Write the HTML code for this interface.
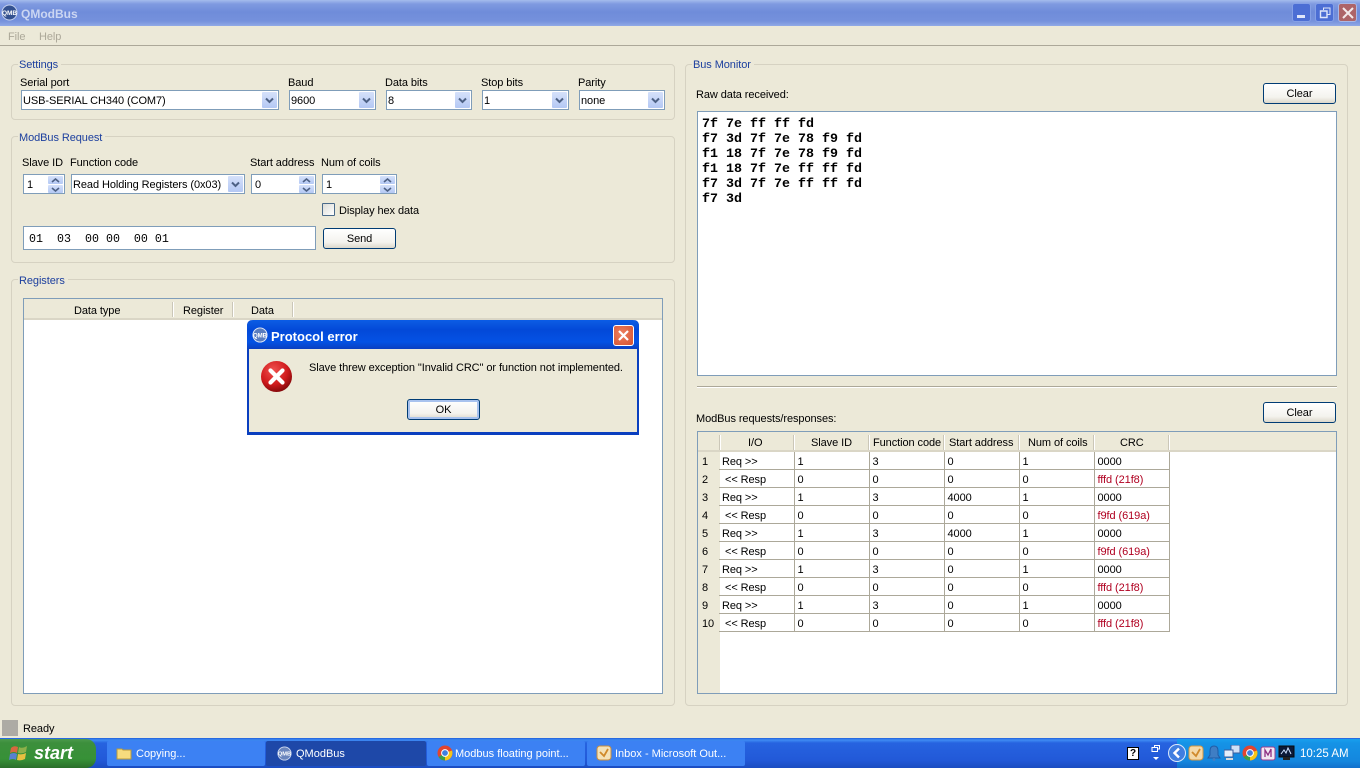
<!DOCTYPE html>
<html><head><meta charset="utf-8"><title>QModBus</title>
<style>
html,body{margin:0;padding:0;width:1360px;height:768px;overflow:hidden;background:#ece9d8}
body{position:relative;font-family:"Liberation Sans",sans-serif;font-size:11px;color:#000;letter-spacing:-.08px}
.t{position:absolute;white-space:nowrap;line-height:14px;height:14px;margin-top:2px}
.b{position:absolute;box-sizing:border-box}
.g{position:absolute;box-sizing:border-box;border:1px solid #d6d2c2;border-radius:4px}
.gt{position:absolute;white-space:nowrap;line-height:14px;background:#ece9d8;color:#1c3f9e;padding:0 3px 0 1px;margin:1px 0 0 -1px}
.in{position:absolute;box-sizing:border-box;background:#fff;border:1px solid #7f9db9;line-height:20px;padding-left:1px;white-space:nowrap}
.ar{position:absolute;right:1px;top:1px;bottom:1px;width:15px;background:linear-gradient(#d5e1fa,#b4c8f4);border-radius:1px}
.ar svg{position:absolute;left:3px;top:5px}
.sp{position:absolute;right:1px;top:1px;bottom:1px;width:15px}
.sp i{position:absolute;left:0;width:15px;height:8px;background:linear-gradient(#d5e1fa,#b4c8f4);border-radius:1px}
.sp svg{position:absolute;left:3px;top:2px}
.btn{position:absolute;box-sizing:border-box;border:1px solid #003c74;border-radius:3px;background:linear-gradient(#fff,#f4f3ee 70%,#dcd8cb);text-align:center;line-height:20px;white-space:nowrap}
.hd{position:absolute;background:#ece9d8;border-bottom:2px solid #dad6c6}
.sec{position:absolute;top:3px;height:15px;width:1px;background:#cbc7b8;box-shadow:1px 0 0 #fff}
table{border-collapse:collapse;table-layout:fixed;position:absolute;font-size:11px}
td{border:1px solid #aca899;border-left:0;border-top:0;height:14px;padding:3px 0 0 3px;line-height:14px;white-space:nowrap;overflow:hidden}
.red{color:#b00020}
.rh{position:absolute;left:699px;width:21px;height:18px;line-height:21px;box-sizing:border-box;padding-left:3px}
.task{position:absolute;top:741px;height:25px;border-radius:2px;box-sizing:border-box;color:#fff;line-height:26px;background:#3c81f3;white-space:nowrap;letter-spacing:0}
</style></head><body>

<!-- title bar -->
<div class="b" style="left:0;top:0;width:1360px;height:26px;background:linear-gradient(#a5bcec 0,#7f9ae0 4px,#6f8cda 12px,#7591dc 21px,#90a9e6 26px)"></div>
<svg class="b" style="left:1px;top:4px" width="17" height="17" viewBox="0 0 17 17"><circle cx="8.5" cy="8.5" r="7.5" fill="#33518f" stroke="#c7d3ee"/><text x="8.5" y="11" font-family="Liberation Sans" font-size="6.5" font-weight="bold" text-anchor="middle" fill="#fff">QMB</text></svg>
<div class="t" style="left:21px;top:5px;font-size:12px;font-weight:bold;color:#cbd6f2;letter-spacing:0">QModBus</div>
<!-- window buttons -->
<div class="b" style="left:1292px;top:3px;width:19px;height:19px;border-radius:3px;background:#4c6ed4;border:1px solid #85a0e6"><div class="b" style="left:4px;top:11px;width:8px;height:3px;background:#dfe6fa"></div></div>
<div class="b" style="left:1315px;top:3px;width:19px;height:19px;border-radius:3px;background:#4c6ed4;border:1px solid #85a0e6"><svg class="b" style="left:3px;top:3px" width="12" height="12" viewBox="0 0 12 12" fill="none" stroke="#dfe6fa"><path d="M4.5 3V1h6.5v6.5H8.5"/><path d="M1.5 4h6.5v6.5H1.5z" stroke-width="1.4"/></svg></div>
<div class="b" style="left:1338px;top:3px;width:19px;height:19px;border-radius:3px;background:#ad6468;border:1px solid #a9b8e6"><svg class="b" style="left:3px;top:3px" width="12" height="12" viewBox="0 0 12 12"><path d="M1 1L11 11M11 1L1 11" stroke="#f3e9ea" stroke-width="2"/></svg></div>

<!-- menu -->
<div class="t" style="left:8px;top:28px;color:#aca899">File</div>
<div class="t" style="left:39px;top:28px;color:#aca899">Help</div>
<div class="b" style="left:0;top:45px;width:1360px;height:1px;background:#aca899"></div>

<!-- Settings -->
<div class="g" style="left:11px;top:64px;width:664px;height:56px"></div>
<div class="gt" style="left:19px;top:57px">Settings</div>
<div class="t" style="left:20px;top:74px">Serial port</div>
<div class="t" style="left:288px;top:74px">Baud</div>
<div class="t" style="left:385px;top:74px">Data bits</div>
<div class="t" style="left:481px;top:74px">Stop bits</div>
<div class="t" style="left:578px;top:74px">Parity</div>
<div class="in" style="left:21px;top:90px;width:258px;height:20px">USB-SERIAL CH340 (COM7)<div class="ar"><svg width="9" height="7" viewBox="0 0 9 7"><path d="M1 1.5L4.5 5L8 1.5" fill="none" stroke="#4d6185" stroke-width="2"/></svg></div></div>
<div class="in" style="left:289px;top:90px;width:87px;height:20px">9600<div class="ar"><svg width="9" height="7" viewBox="0 0 9 7"><path d="M1 1.5L4.5 5L8 1.5" fill="none" stroke="#4d6185" stroke-width="2"/></svg></div></div>
<div class="in" style="left:386px;top:90px;width:86px;height:20px">8<div class="ar"><svg width="9" height="7" viewBox="0 0 9 7"><path d="M1 1.5L4.5 5L8 1.5" fill="none" stroke="#4d6185" stroke-width="2"/></svg></div></div>
<div class="in" style="left:482px;top:90px;width:87px;height:20px">1<div class="ar"><svg width="9" height="7" viewBox="0 0 9 7"><path d="M1 1.5L4.5 5L8 1.5" fill="none" stroke="#4d6185" stroke-width="2"/></svg></div></div>
<div class="in" style="left:579px;top:90px;width:86px;height:20px">none<div class="ar"><svg width="9" height="7" viewBox="0 0 9 7"><path d="M1 1.5L4.5 5L8 1.5" fill="none" stroke="#4d6185" stroke-width="2"/></svg></div></div>

<!-- ModBus Request -->
<div class="g" style="left:11px;top:136px;width:664px;height:127px"></div>
<div class="gt" style="left:19px;top:130px">ModBus Request</div>
<div class="t" style="left:22px;top:154px">Slave ID</div>
<div class="t" style="left:70px;top:154px">Function code</div>
<div class="t" style="left:250px;top:154px">Start address</div>
<div class="t" style="left:321px;top:154px">Num of coils</div>
<div class="in" style="left:23px;top:174px;width:42px;height:20px;padding-left:3px">1<div class="sp"><i style="top:0"><svg width="9" height="5" viewBox="0 0 9 5"><path d="M1 4L4.5 1L8 4" fill="none" stroke="#4d6185" stroke-width="1.6"/></svg></i><i style="top:9px"><svg width="9" height="5" viewBox="0 0 9 5"><path d="M1 1L4.5 4L8 1" fill="none" stroke="#4d6185" stroke-width="1.6"/></svg></i></div></div>
<div class="in" style="left:71px;top:174px;width:174px;height:20px">Read Holding Registers (0x03)<div class="ar"><svg width="9" height="7" viewBox="0 0 9 7"><path d="M1 1.5L4.5 5L8 1.5" fill="none" stroke="#4d6185" stroke-width="2"/></svg></div></div>
<div class="in" style="left:251px;top:174px;width:65px;height:20px;padding-left:3px">0<div class="sp"><i style="top:0"><svg width="9" height="5" viewBox="0 0 9 5"><path d="M1 4L4.5 1L8 4" fill="none" stroke="#4d6185" stroke-width="1.6"/></svg></i><i style="top:9px"><svg width="9" height="5" viewBox="0 0 9 5"><path d="M1 1L4.5 4L8 1" fill="none" stroke="#4d6185" stroke-width="1.6"/></svg></i></div></div>
<div class="in" style="left:322px;top:174px;width:75px;height:20px;padding-left:3px">1<div class="sp"><i style="top:0"><svg width="9" height="5" viewBox="0 0 9 5"><path d="M1 4L4.5 1L8 4" fill="none" stroke="#4d6185" stroke-width="1.6"/></svg></i><i style="top:9px"><svg width="9" height="5" viewBox="0 0 9 5"><path d="M1 1L4.5 4L8 1" fill="none" stroke="#4d6185" stroke-width="1.6"/></svg></i></div></div>
<div class="b" style="left:322px;top:203px;width:13px;height:13px;border:1px solid #4a6a8a;border-radius:1px;background:linear-gradient(135deg,#dcdcd7,#fff)"></div>
<div class="t" style="left:339px;top:202px">Display hex data</div>
<div class="in" style="left:23px;top:226px;width:293px;height:24px;line-height:24px;padding-left:5px;font-family:'Liberation Mono',monospace;font-size:11.67px;white-space:pre;letter-spacing:0">01  03  00 00  00 01</div>
<div class="btn" style="left:323px;top:228px;width:73px;height:21px">Send</div>

<!-- Registers -->
<div class="g" style="left:11px;top:279px;width:664px;height:427px"></div>
<div class="gt" style="left:19px;top:273px">Registers</div>
<div class="b" style="left:23px;top:298px;width:640px;height:396px;background:#fff;border:1px solid #7f9db9"></div>
<div class="hd" style="left:24px;top:299px;width:638px;height:19px"><div class="sec" style="left:148px"></div><div class="sec" style="left:208px"></div><div class="sec" style="left:268px"></div></div>
<div class="t" style="left:74px;top:302px">Data type</div>
<div class="t" style="left:183px;top:302px">Register</div>
<div class="t" style="left:251px;top:302px">Data</div>

<!-- Bus Monitor -->
<div class="g" style="left:685px;top:64px;width:663px;height:642px"></div>
<div class="gt" style="left:693px;top:57px">Bus Monitor</div>
<div class="t" style="left:696px;top:86px">Raw data received:</div>
<div class="btn" style="left:1263px;top:83px;width:73px;height:21px">Clear</div>
<div class="b" style="left:697px;top:111px;width:640px;height:265px;background:#fff;border:1px solid #7f9db9;padding:5px 0 0 4px;font:bold 13.33px/15px 'Liberation Mono',monospace;white-space:pre;letter-spacing:0">7f 7e ff ff fd
f7 3d 7f 7e 78 f9 fd
f1 18 7f 7e 78 f9 fd
f1 18 7f 7e ff ff fd
f7 3d 7f 7e ff ff fd
f7 3d</div>
<div class="b" style="left:697px;top:386px;width:640px;height:1px;background:#aca899;box-shadow:0 1px 0 #fff"></div>
<div class="t" style="left:696px;top:410px">ModBus requests/responses:</div>
<div class="btn" style="left:1263px;top:402px;width:73px;height:21px">Clear</div>

<div class="b" style="left:697px;top:431px;width:640px;height:263px;background:#fff;border:1px solid #7f9db9"></div>
<div class="b" style="left:698px;top:452px;width:22px;height:241px;background:#ece9d8"></div>
<div class="hd" style="left:698px;top:432px;width:638px;height:18px"><div class="sec" style="left:21px"></div><div class="sec" style="left:95px"></div><div class="sec" style="left:170px"></div><div class="sec" style="left:245px"></div><div class="sec" style="left:320px"></div><div class="sec" style="left:395px"></div><div class="sec" style="left:470px"></div></div>
<div class="t" style="left:748px;top:434px">I/O</div>
<div class="t" style="left:811px;top:434px">Slave ID</div>
<div class="t" style="left:873px;top:434px">Function code</div>
<div class="t" style="left:949px;top:434px">Start address</div>
<div class="t" style="left:1028px;top:434px">Num of coils</div>
<div class="t" style="left:1120px;top:434px">CRC</div>

<div class="rh" style="top:452px">1</div><div class="rh" style="top:470px">2</div><div class="rh" style="top:488px">3</div><div class="rh" style="top:506px">4</div><div class="rh" style="top:524px">5</div><div class="rh" style="top:542px">6</div><div class="rh" style="top:560px">7</div><div class="rh" style="top:578px">8</div><div class="rh" style="top:596px">9</div><div class="rh" style="top:614px">10</div>

<table style="left:719px;top:452px;width:450px">
<colgroup><col style="width:75px"><col style="width:75px"><col style="width:75px"><col style="width:75px"><col style="width:75px"><col style="width:75px"></colgroup>
<tr><td>Req &gt;&gt;</td><td>1</td><td>3</td><td>0</td><td>1</td><td>0000</td></tr>
<tr><td>&nbsp;&lt;&lt; Resp</td><td>0</td><td>0</td><td>0</td><td>0</td><td class="red">fffd (21f8)</td></tr>
<tr><td>Req &gt;&gt;</td><td>1</td><td>3</td><td>4000</td><td>1</td><td>0000</td></tr>
<tr><td>&nbsp;&lt;&lt; Resp</td><td>0</td><td>0</td><td>0</td><td>0</td><td class="red">f9fd (619a)</td></tr>
<tr><td>Req &gt;&gt;</td><td>1</td><td>3</td><td>4000</td><td>1</td><td>0000</td></tr>
<tr><td>&nbsp;&lt;&lt; Resp</td><td>0</td><td>0</td><td>0</td><td>0</td><td class="red">f9fd (619a)</td></tr>
<tr><td>Req &gt;&gt;</td><td>1</td><td>3</td><td>0</td><td>1</td><td>0000</td></tr>
<tr><td>&nbsp;&lt;&lt; Resp</td><td>0</td><td>0</td><td>0</td><td>0</td><td class="red">fffd (21f8)</td></tr>
<tr><td>Req &gt;&gt;</td><td>1</td><td>3</td><td>0</td><td>1</td><td>0000</td></tr>
<tr><td>&nbsp;&lt;&lt; Resp</td><td>0</td><td>0</td><td>0</td><td>0</td><td class="red">fffd (21f8)</td></tr>
</table>

<!-- dialog -->
<div class="b" style="left:247px;top:320px;width:392px;height:115px;background:#ece9d8;border:2px solid #0a3fbf;border-bottom-width:3px;border-top:0;border-radius:5px 5px 0 0"></div>
<div class="b" style="left:247px;top:320px;width:392px;height:29px;border-radius:6px 6px 0 0;background:linear-gradient(#0a5ce6 0,#0a57e0 3px,#0349d8 10px,#0452e4 22px,#0a3fc0 29px)"></div>
<svg class="b" style="left:252px;top:327px" width="16" height="16" viewBox="0 0 17 17"><circle cx="8.5" cy="8.5" r="7.5" fill="#5a7dbf" stroke="#e3ebf8"/><text x="8.5" y="11" font-family="Liberation Sans" font-size="6.5" font-weight="bold" text-anchor="middle" fill="#fff">QMB</text></svg>
<div class="t" style="left:271px;top:328px;font-size:13px;font-weight:bold;color:#fff;letter-spacing:0">Protocol error</div>
<div class="b" style="left:613px;top:325px;width:21px;height:21px;border-radius:3px;border:1px solid #fff;background:radial-gradient(circle at 40% 40%,#ee8060,#d4512f)"><svg class="b" style="left:3px;top:3px" width="13" height="13" viewBox="0 0 13 13"><path d="M2 2L11 11M11 2L2 11" stroke="#fff" stroke-width="2.2"/></svg></div>
<svg class="b" style="left:260px;top:360px" width="33" height="33" viewBox="0 0 33 33"><defs><radialGradient id="rg" cx="40%" cy="30%" r="75%"><stop offset="0" stop-color="#f0524f"/><stop offset=".6" stop-color="#d01a1c"/><stop offset="1" stop-color="#7a0608"/></radialGradient></defs><circle cx="16.5" cy="16.5" r="15.5" fill="url(#rg)"/><path d="M10.5 10.5L22.5 22.5M22.5 10.5L10.5 22.5" stroke="#fff" stroke-width="4.2" stroke-linecap="round"/></svg>
<div class="t" style="left:309px;top:359px">Slave threw exception "Invalid CRC" or function not implemented.</div>
<div class="btn" style="left:407px;top:399px;width:73px;height:21px;border-color:#003c74;box-shadow:inset 0 0 0 2px #a8c2ee">OK</div>

<!-- status -->
<div class="b" style="left:2px;top:720px;width:16px;height:16px;background:#adaba4"></div>
<div class="t" style="left:23px;top:720px">Ready</div>

<!-- taskbar -->
<div class="b" style="left:0;top:738px;width:1360px;height:30px;background:linear-gradient(#1f5fdb 0,#3f8cf3 2px,#2663e0 5px,#2259d8 22px,#1b4cc0 30px)"></div>
<div class="b" style="left:0;top:739px;width:96px;height:29px;border-radius:0 10px 10px 0;background:linear-gradient(#4d9a4d 0,#3c8f3c 4px,#379137 20px,#2a6e2a 29px)"></div>
<svg class="b" style="left:9px;top:743px" width="20" height="20" viewBox="0 0 20 20"><path d="M2 5Q5 2 9 4L8 10Q5 8 1 10z" fill="#d8683f"/><path d="M10 4Q13 6 18 3L17 9Q13 11 9 10z" fill="#8db04a"/><path d="M1 11Q5 9 8 11L7 17Q4 15 0 17z" fill="#5a80d0"/><path d="M9 11Q13 12 17 10L16 16Q12 18 8 17z" fill="#e8c040"/></svg>
<div class="t" style="left:34px;top:742px;height:18px;line-height:18px;font-size:18px;font-weight:bold;font-style:italic;color:#fff;letter-spacing:0">start</div>

<div class="task" style="left:107px;width:158px;padding-left:29px">Copying...</div>
<svg class="b" style="left:116px;top:746px" width="16" height="14" viewBox="0 0 16 14"><path d="M1 3h5l1 1h8v9H1z" fill="#f6dc7e" stroke="#b99a3c"/></svg>
<div class="task" style="left:266px;width:160px;padding-left:30px;background:#1e48a8">QModBus</div>
<svg class="b" style="left:277px;top:746px" width="15" height="15" viewBox="0 0 17 17"><circle cx="8.5" cy="8.5" r="7.5" fill="#6a85bd" stroke="#cfdaf0"/><text x="8.5" y="11" font-family="Liberation Sans" font-size="6.5" font-weight="bold" text-anchor="middle" fill="#fff">QMB</text></svg>
<div class="task" style="left:427px;width:158px;padding-left:28px">Modbus floating point...</div>
<svg class="b" style="left:437px;top:745px" width="16" height="16" viewBox="0 0 16 16"><circle cx="8" cy="8" r="7.5" fill="#e2452f"/><path d="M8 8L1.5 12A7.5 7.5 0 0 0 8 15.5z" fill="#3d9e46"/><path d="M8 8L8 15.5A7.5 7.5 0 0 0 15 5.5z" fill="#f5c518"/><circle cx="8" cy="8" r="3.4" fill="#3e7fe0" stroke="#fff"/></svg>
<div class="task" style="left:587px;width:158px;padding-left:28px">Inbox - Microsoft Out...</div>
<svg class="b" style="left:596px;top:745px" width="16" height="16" viewBox="0 0 16 16"><rect x="1" y="1" width="14" height="14" rx="3" fill="#f4e2b8" stroke="#c98d3e"/><path d="M4 7l4 4 4-7" fill="none" stroke="#d08a2b" stroke-width="1.8"/></svg>

<!-- tray -->
<div class="b" style="left:1177px;top:739px;width:183px;height:29px;background:linear-gradient(#18a0ee 0,#1593e6 4px,#1487de 22px,#1270cc 29px)"></div>
<div class="b" style="left:1127px;top:747px;width:12px;height:13px;background:#fff;border:1px solid #000;font:bold 10px/12px 'Liberation Sans';text-align:center;color:#000">?</div>
<svg class="b" style="left:1150px;top:744px" width="12" height="18" viewBox="0 0 12 18" fill="none" stroke="#fff"><path d="M4.5 3V1.5h5v3.5H8"/><path d="M2 3.5h5.5v4H2z"/><path d="M3 13h6l-3 3z" fill="#fff" stroke="none"/></svg>
<svg class="b" style="left:1168px;top:744px" width="18" height="18" viewBox="0 0 18 18"><circle cx="9" cy="9" r="8.5" fill="#3f7ee0" stroke="#dbe8fb"/><path d="M11 4.5L6.5 9L11 13.5" fill="none" stroke="#fff" stroke-width="2.4"/></svg>
<svg class="b" style="left:1188px;top:745px" width="16" height="16" viewBox="0 0 16 16"><rect x="1" y="1" width="14" height="14" rx="3" fill="#f4d9a8" stroke="#d29642"/><path d="M4 7l4 4 4-7" fill="none" stroke="#d08a2b" stroke-width="1.8"/></svg>
<svg class="b" style="left:1207px;top:745px" width="14" height="16" viewBox="0 0 14 16"><path d="M7 1Q3 1 3 6V10L1 13H13L11 10V6Q11 1 7 1z" fill="#3f7ec4" stroke="#1f5ca6"/><circle cx="7" cy="14.5" r="1.5" fill="#3f7ec4"/></svg>
<svg class="b" style="left:1224px;top:745px" width="16" height="16" viewBox="0 0 16 16"><rect x="7" y="0" width="9" height="8" fill="#cfe0f7" stroke="#3a5e9f"/><rect x="0" y="5" width="9" height="7" fill="#e4eefb" stroke="#3a5e9f"/><rect x="2" y="13" width="7" height="2" fill="#d9d9d9"/></svg>
<svg class="b" style="left:1242px;top:745px" width="16" height="16" viewBox="0 0 16 16"><circle cx="8" cy="8" r="7.5" fill="#e2452f"/><path d="M8 8L1.5 12A7.5 7.5 0 0 0 8 15.5z" fill="#3d9e46"/><path d="M8 8L8 15.5A7.5 7.5 0 0 0 15 5.5z" fill="#f5c518"/><circle cx="8" cy="8" r="3.4" fill="#3e7fe0" stroke="#fff"/></svg>
<svg class="b" style="left:1260px;top:745px" width="16" height="16" viewBox="0 0 16 16"><rect x="1" y="2" width="14" height="13" rx="2" fill="#f2e6f2" stroke="#9b3d8e"/><path d="M5 12V5l3 5 3-6v8" fill="none" stroke="#8e2f82" stroke-width="1.3"/></svg>
<svg class="b" style="left:1278px;top:745px" width="17" height="16" viewBox="0 0 17 16"><rect x="1" y="1" width="15" height="11" fill="#0b1a38" stroke="#0a0a0a"/><path d="M3 9l3-4 2 3 2-5 3 6" fill="none" stroke="#cfe2ff"/><rect x="5" y="12" width="7" height="3" fill="#222"/></svg>
<div class="t" style="left:1300px;top:745px;color:#fff;font-size:11.5px;letter-spacing:0">10:25 AM</div>
</body></html>
